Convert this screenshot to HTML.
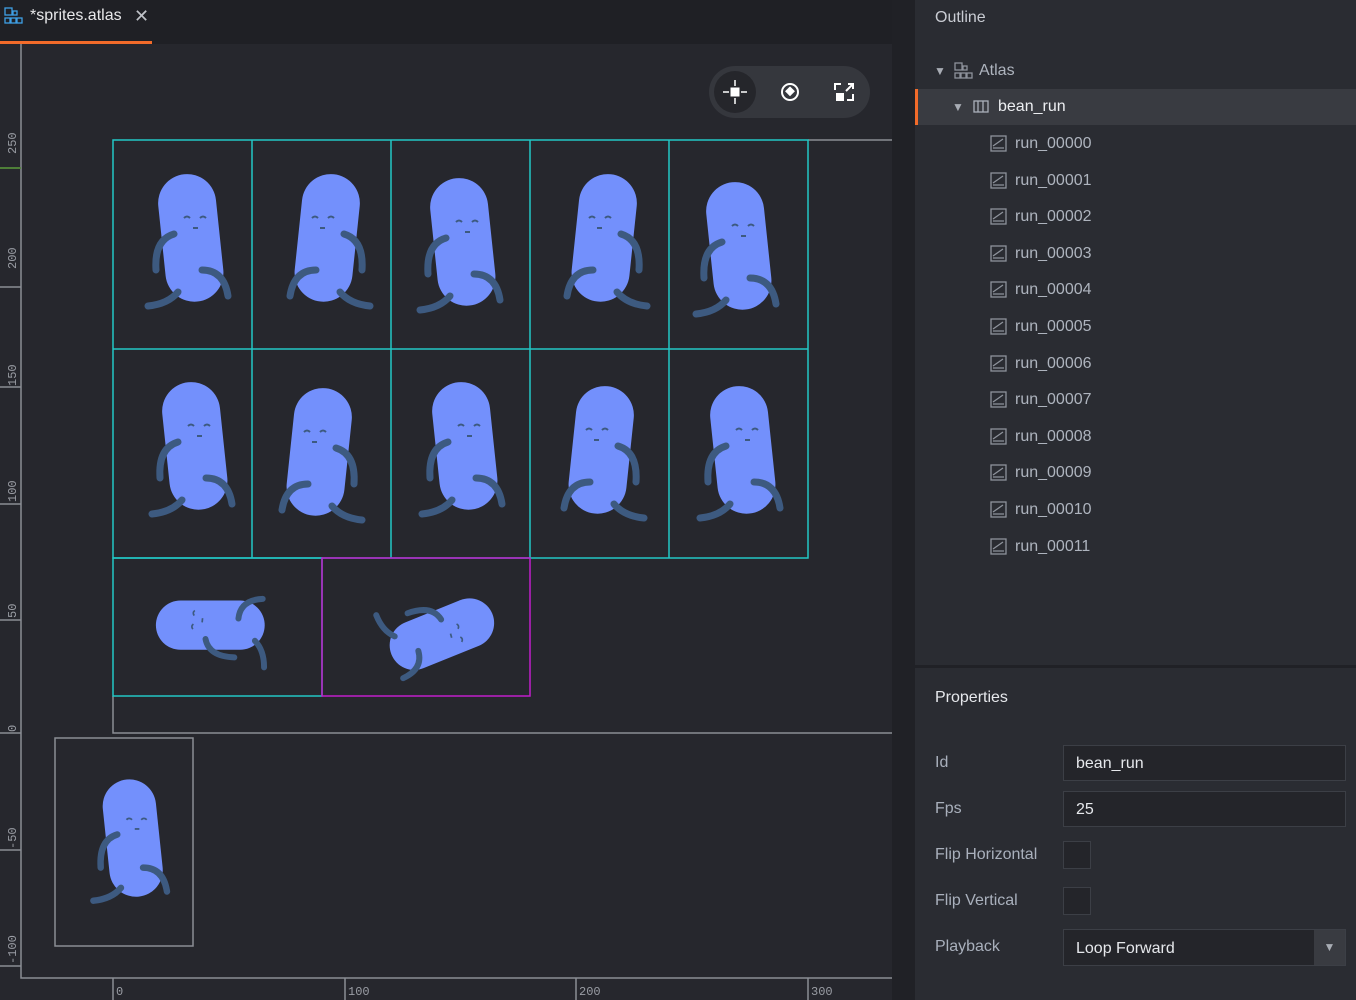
<!DOCTYPE html><html><head><style>
body{margin:0;width:1356px;height:1000px;overflow:hidden;background:#26272d;font-family:"Liberation Sans",sans-serif;position:relative}
.abs{position:absolute}
.panel{left:915px;top:0;width:441px;height:1000px;background:#2a2c32}
.t{color:#c9ccd3;font-size:16px}
.row{position:absolute;left:915px;width:441px;height:36px}
.lbl{position:absolute;left:935px;color:#a9b0bc;font-size:16px}
.box{position:absolute;left:1063px;border:1px solid #3c3f46;background:#24252a;color:#e6e8ec;font-size:16px;line-height:36px;padding-left:12px;box-sizing:border-box;width:283px;height:36px}
.cb{position:absolute;left:1063px;width:26px;height:26px;border:1px solid #3c3f46;background:#24252a}
</style></head><body>
<div class="abs" style="left:0;top:0;width:892px;height:44px;background:#1f2025"></div>
<div class="abs" style="left:0;top:41px;width:152px;height:3px;background:#f26b2a"></div>
<svg class="abs" style="left:4px;top:7px" width="20" height="18" viewBox="0 0 20 18" fill="none" stroke="#3fa0e6" stroke-width="1.3"><rect x="1" y="1" width="7" height="7"/><rect x="9" y="4" width="4" height="4"/><rect x="1" y="11" width="5" height="5"/><rect x="7" y="11" width="5" height="5"/><rect x="13" y="11" width="5" height="5"/></svg>
<div class="abs" style="left:30px;top:7px;color:#e8e8ea;font-size:16px">*sprites.atlas</div>
<div class="abs" style="left:134px;top:6px;color:#bfc2c8;font-size:18px">✕</div>
<div class="abs" style="left:892px;top:0;width:23px;height:1000px;background:#202126"></div>
<svg class="abs" style="left:0;top:44px" width="892" height="956">
<defs>
<g id="b"><rect x="-28" y="-66" width="58" height="128" rx="29" fill="#7390fc" transform="rotate(-6)"/><g fill="none" stroke="#3d5a80" stroke-width="7" stroke-linecap="round"><path d="M-16,-6 Q-36,0 -34,30"/><path d="M-12,52 Q-22,64 -42,66"/><path d="M12,30 Q34,30 38,56"/></g><g fill="none" stroke="#3d5a80" stroke-width="2"><path d="M-6,-22 q3,-3 6,0"/><path d="M10,-22 q3,-3 6,0"/><path d="M3,-12 h5"/></g></g>
</defs>
<g stroke="#8a8d94" stroke-width="1.5" fill="none">
<path d="M21,0 V934 H892"/>
<path d="M808,96 H892"/><path d="M113,652 V689 H892"/>
<rect x="55" y="694" width="138" height="208"/>
<path d="M0,124H21M0,243H21M0,343H21M0,460H21M0,576H21M0,689H21M0,806H21M0,922H21"/>
<path d="M113,934V956M345,934V956M576,934V956M808,934V956"/>
</g>
<path d="M0,124H21" stroke="#4a8a2a" stroke-width="1.5"/>
<g fill="#9a9da4" font-size="12" font-family="Liberation Mono,monospace">
<text transform="translate(16,110) rotate(-90)">250</text>
<text transform="translate(16,225) rotate(-90)">200</text>
<text transform="translate(16,342) rotate(-90)">150</text>
<text transform="translate(16,458) rotate(-90)">100</text>
<text transform="translate(16,574) rotate(-90)">50</text>
<text transform="translate(16,688) rotate(-90)">0</text>
<text transform="translate(16,805) rotate(-90)">-50</text>
<text transform="translate(16,920) rotate(-90)">-100</text>
<text x="116" y="951">0</text><text x="348" y="951">100</text><text x="579" y="951">200</text><text x="811" y="951">300</text>
</g>
<g fill="none" stroke="#22c7c5" stroke-width="1.5">
<rect x="113" y="96" width="695" height="418"/>
<path d="M113,305H808M252,96V514M391,96V514M530,96V514M669,96V514"/>
<rect x="113" y="514" width="209" height="138"/>
</g>
<rect x="322" y="514" width="208" height="138" fill="none" stroke="#c01ecb" stroke-width="1.5"/>
<use href="#b" transform="translate(190,196)"/><use href="#b" transform="translate(328,196) scale(-1,1)"/>
<use href="#b" transform="translate(462,200)"/><use href="#b" transform="translate(605,196) scale(-1,1)"/>
<use href="#b" transform="translate(738,204)"/>
<use href="#b" transform="translate(194,404)"/><use href="#b" transform="translate(320,410) scale(-1,1)"/>
<use href="#b" transform="translate(464,404)"/><use href="#b" transform="translate(602,408) scale(-1,1)"/>
<use href="#b" transform="translate(742,408)"/>
<use href="#b" transform="translate(212,582) rotate(-84) scale(0.85)"/>
<use href="#b" transform="translate(440,590) rotate(74) scale(0.85)"/>
<use href="#b" transform="translate(132,796) scale(0.92)"/>
<rect x="709" y="22" width="161" height="52" rx="26" fill="#35373d"/>
<circle cx="735" cy="48" r="21" fill="#25262b"/>
<g fill="#fff" stroke="#fff"><rect x="731" y="44" width="8" height="8"/><path d="M735,36V42M735,54V60M723,48H729M741,48H747" stroke-width="1.5"/></g>
<circle cx="790" cy="48" r="8" fill="none" stroke="#fff" stroke-width="2"/><rect x="786" y="44" width="7" height="7" fill="#fff" transform="rotate(45 790 48)"/>
<g fill="none" stroke="#fff" stroke-width="2"><path d="M835,46V40H841M847,56H853V50M846,47L853,40M848,40H853V45"/></g><rect x="836" y="49" width="8" height="8" fill="#fff"/>
</svg>
<div class="abs panel"></div>
<div class="abs t" style="left:935px;top:9px">Outline</div>
<div class="row" style="top:89px;background:#393b41"></div>
<div class="abs" style="left:915px;top:89px;width:3px;height:36px;background:#f26b2a"></div>
<div class="abs" style="left:934px;top:64px;color:#a8acb4;font-size:12px">▼</div>
<svg class="abs" style="left:954px;top:62px" width="20" height="17" fill="none" stroke="#8e939c" stroke-width="1.3"><rect x="1" y="1" width="7" height="7"/><rect x="9" y="4" width="4" height="4"/><rect x="1" y="11" width="5" height="5"/><rect x="7" y="11" width="5" height="5"/><rect x="13" y="11" width="5" height="5"/></svg>
<div class="abs t" style="left:979px;top:62px;color:#aeb4be">Atlas</div>
<div class="abs" style="left:952px;top:100px;color:#a8acb4;font-size:12px">▼</div>
<svg class="abs" style="left:973px;top:99px" width="17" height="15" fill="none" stroke="#aab0ba" stroke-width="1.3"><rect x="1" y="2" width="14" height="11"/><path d="M5,2V13M10,2V13"/></svg>
<div class="abs t" style="left:998px;top:98px;color:#eceef1">bean_run</div>
<div id="runs"></div>
<div class="abs" style="left:915px;top:665px;width:441px;height:3px;background:#202126"></div>
<div class="abs t" style="left:935px;top:689px;color:#e6e8ec">Properties</div>
<div class="lbl" style="top:754px">Id</div><div class="box" style="top:745px">bean_run</div>
<div class="lbl" style="top:800px">Fps</div><div class="box" style="top:791px">25</div>
<div class="lbl" style="top:846px">Flip Horizontal</div><div class="cb" style="top:841px"></div>
<div class="lbl" style="top:892px">Flip Vertical</div><div class="cb" style="top:887px"></div>
<div class="lbl" style="top:938px">Playback</div><div class="box" style="top:929px;height:37px;line-height:37px">Loop Forward</div>
<div class="abs" style="left:1314px;top:930px;width:31px;height:35px;background:#393b41;color:#a8acb4;font-size:12px;text-align:center;line-height:35px">▼</div>
<script>
var h='';for(var i=0;i<12;i++){var y=143+i*36.6;h+='<svg class="abs" style="left:990px;top:'+(y-8)+'px" width="17" height="17" fill="none" stroke="#8e939c" stroke-width="1.3"><rect x="1" y="1" width="15" height="15"/><path d="M3,11L13,4M3,13H14"/></svg><div class="abs t" style="left:1015px;top:'+(y-8)+'px;color:#aeb4be">run_'+('0000'+i).slice(-5)+'</div>';}
document.getElementById('runs').innerHTML=h;
</script>
</body></html>
